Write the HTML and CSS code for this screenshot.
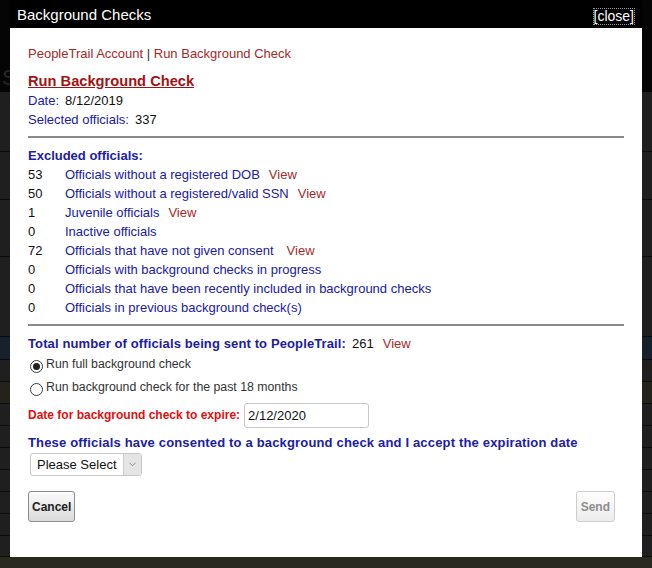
FILE: index.html
```html
<!DOCTYPE html>
<html>
<head>
<meta charset="utf-8">
<title>Background Checks</title>
<link rel="stylesheet" href="styles.css">
</head>
<body>
<div class="page">
  <div class="page-header"><span class="page-title">S</span></div>
  <div class="row h60"></div>
  <div class="row h48"></div>
  <div class="row h57"></div>
  <div class="row h80"></div>
  <div class="row h23 blue"></div>
  <div class="row h22"></div>
  <div class="row h22 olive"></div>
  <div class="row h22"></div>
  <div class="row h22"></div>
  <div class="row h22"></div>
  <div class="row h22"></div>
  <div class="row h22"></div>
  <div class="row h22"></div>
  <div class="row h21"></div>
  <div class="page-footer"></div>
</div>

<div class="dialog">
  <div class="titlebar">
    <span class="title">Background Checks</span>
    <a class="close">[close]</a>
  </div>
  <div class="content">
    <div class="crumbs"><a class="link">PeopleTrail Account</a><span class="sep"> | </span><a class="link">Run Background Check</a></div>
    <h2 class="heading">Run Background Check</h2>
    <div class="info"><span class="lbl">Date:</span><span class="val">8/12/2019</span></div>
    <div class="info"><span class="lbl">Selected officials:</span><span class="val">337</span></div>
    <div class="rule"></div>
    <div class="section-title">Excluded officials:</div>
    <div class="excluded">
      <span class="num">53</span><span class="desc">Officials without a registered DOB<a class="link view">View</a></span>
      <span class="num">50</span><span class="desc">Officials without a registered/valid SSN<a class="link view">View</a></span>
      <span class="num">1</span><span class="desc">Juvenile officials<a class="link view">View</a></span>
      <span class="num">0</span><span class="desc">Inactive officials</span>
      <span class="num">72</span><span class="desc">Officials that have not given consent<a class="link view wide">View</a></span>
      <span class="num">0</span><span class="desc">Officials with background checks in progress</span>
      <span class="num">0</span><span class="desc">Officials that have been recently included in background checks</span>
      <span class="num">0</span><span class="desc">Officials in previous background check(s)</span>
    </div>
    <div class="rule"></div>
    <div class="total"><span class="section-title total-title">Total number of officials being sent to PeopleTrail:</span><span class="val">261</span><a class="link view">View</a></div>
    <div class="radio-row"><span class="radio checked"></span><span class="radio-label">Run full background check</span></div>
    <div class="radio-row"><span class="radio"></span><span class="radio-label">Run background check for the past 18 months</span></div>
    <div class="expire-row"><span class="expire-label">Date for background check to expire:</span><input class="date-input" type="text" value="2/12/2020"></div>
    <div class="section-title consent">These officials have consented to a background check and I accept the expiration date</div>
    <div class="select"><span class="select-text">Please Select</span><span class="select-arrow"><svg width="7" height="5" viewBox="0 0 7 5"><path d="M0.5 0.8 L3.5 3.8 L6.5 0.8" fill="none" stroke="#8a8a8a" stroke-width="1"/></svg></span></div>
    <div class="actions">
      <button class="btn">Cancel</button>
      <button class="btn disabled" disabled>Send</button>
    </div>
  </div>
</div>
</body>
</html>
```
FILE: styles.css
```css
html, body {
  margin: 0;
  padding: 0;
  height: 100%;
}
body {
  position: relative;
  overflow: hidden;
  background: #1e1e1e;
  font-family: "Liberation Sans", Arial, sans-serif;
}

/* page behind the overlay */
.page {
  display: flex;
  flex-direction: column;
  height: 100%;
}
.page-header {
  height: 92px;
  flex: none;
  background: #050505;
}
.page-title {
  display: block;
  padding: 66px 0 0 2px;
  font-size: 22px;
  line-height: 24px;
  color: #262626;
}
.row {
  flex: none;
  box-sizing: border-box;
  background: #1f1f1f;
  border-bottom: 1px solid #0c0c0c;
}
.h60 { height: 60px; }
.h48 { height: 48px; }
.h57 { height: 57px; }
.h80 { height: 80px; }
.h23 { height: 23px; }
.h22 { height: 22px; }
.h21 { height: 21px; }
.row.blue { background: #18202c; }
.row.olive { background: #23231b; }
.page-footer {
  flex: 1;
  background: #2a291f;
}

/* dialog */
.dialog {
  position: absolute;
  left: 10px;
  top: 0;
  width: 632px;
  bottom: 11px;
  display: flex;
  flex-direction: column;
}
.titlebar {
  height: 28px;
  flex: none;
  background: #000;
  color: #fff;
  display: flex;
  align-items: center;
  justify-content: space-between;
  padding: 1px 8px 0 7px;
  box-sizing: border-box;
}
.title {
  font-size: 15px;
  line-height: 18px;
}
.close {
  font-size: 14px;
  line-height: 15px;
  color: #fff;
  outline: 1px dotted #9a9a9a;
  margin-top: 3px;
}
.content {
  flex: 1;
  background: #fff;
  padding: 15.5px 18px 0 18px;
  font-size: 13px;
  line-height: 19px;
  color: #111;
}
.link {
  color: #a52a2a;
  text-decoration: none;
}
.crumbs .sep {
  color: #333;
}
.heading {
  margin: 8px 0 0 0;
  font-size: 14.67px;
  line-height: 20px;
  font-weight: bold;
  color: #a01414;
  text-decoration: underline;
}
.lbl {
  color: #2020a0;
}
.val {
  margin-left: 6px;
  color: #111;
}
.rule {
  height: 2px;
  background: #8a8a8a;
  margin: 7.5px 0;
}
.section-title {
  font-weight: bold;
  color: #2020a0;
}
.excluded {
  display: grid;
  grid-template-columns: 37px auto;
}
.num { color: #111; }
.desc { color: #2020a0; }
.view { margin-left: 9px; }
.view.wide { margin-left: 13px; }
.total-title { letter-spacing: 0.12px; }
.total .val { margin-left: 6px; }

.radio-row {
  display: flex;
  align-items: center;
  height: 23px;
  padding-left: 2px;
}
.radio {
  box-sizing: border-box;
  width: 13px;
  height: 13px;
  border: 1px solid #3a3a3a;
  border-radius: 50%;
  background: #fff;
  margin: 5px 3px 0 0;
  display: flex;
  align-items: center;
  justify-content: center;
  flex: none;
}
.radio.checked::after {
  content: "";
  width: 7px;
  height: 7px;
  border-radius: 50%;
  background: #222;
}
.radio-label {
  font-size: 12.3px;
  color: #333;
}
.expire-row {
  display: flex;
  align-items: center;
  margin-top: 4.5px;
  height: 25px;
}
.expire-label {
  font-size: 12px;
  font-weight: bold;
  color: #e01010;
}
.date-input {
  box-sizing: border-box;
  margin: 0 0 0 4px;
  width: 125px;
  height: 25px;
  padding: 0 3px;
  border: 1px solid #c8c8c8;
  border-radius: 3px;
  font-family: "Liberation Sans", Arial, sans-serif;
  font-size: 13px;
  color: #111;
  outline: none;
}
.consent {
  margin-top: 5px;
  letter-spacing: 0.17px;
}
.select {
  box-sizing: border-box;
  margin: 1px 0 0 2px;
  width: 112px;
  height: 23px;
  display: flex;
  border: 1px solid #c8c8c8;
  border-radius: 3px;
  overflow: hidden;
}
.select-text {
  flex: 1;
  padding-left: 6px;
  line-height: 21px;
  font-size: 13px;
  color: #111;
}
.select-arrow {
  width: 17px;
  background: #e4e4e4;
  border-left: 1px solid #cfcfcf;
  display: flex;
  align-items: center;
  justify-content: center;
}
.actions {
  display: flex;
  justify-content: space-between;
  margin-top: 15px;
  padding-right: 9px;
}
.btn {
  height: 31px;
  padding: 0 3px;
  border: 1px solid #8c8c8c;
  border-radius: 3px;
  background: linear-gradient(#fbfbfb, #dadada);
  font-family: "Liberation Sans", Arial, sans-serif;
  font-size: 12px;
  font-weight: bold;
  color: #222;
}
.btn.disabled {
  border-color: #cdcdcd;
  background: linear-gradient(#fefefe, #ececec);
  color: #8e8e8e;
  padding: 0 4px;
}
```
